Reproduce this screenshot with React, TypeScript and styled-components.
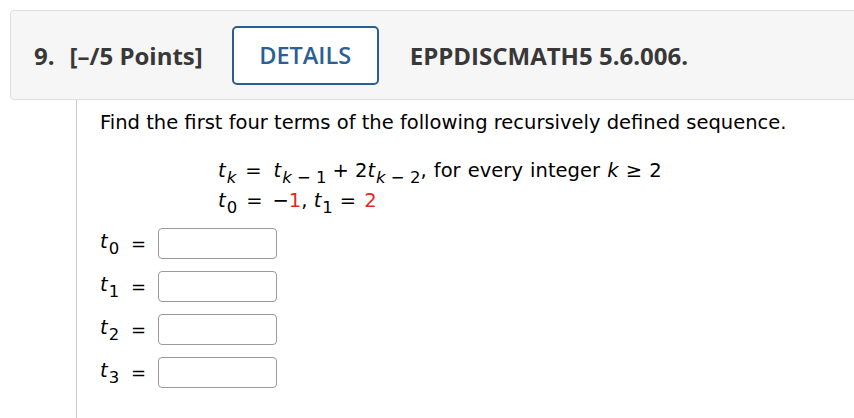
import React from "react";
import styled, { createGlobalStyle } from "styled-components";

const Global = createGlobalStyle`
  html, body { margin: 0; padding: 0; background: #ffffff; overflow: hidden; }
  #root { width: 854px; height: 418px; }
`;

const Page = styled.div`
  width: 854px;
  height: 418px;
  padding: 10px 0 0 10px;
  box-sizing: border-box;
  display: flex;
  flex-direction: column;
  overflow: hidden;
`;

const Header = styled.div`
  height: 90px;
  box-sizing: border-box;
  margin-right: -6px;
  background: #f6f6f6;
  border: 1px solid #dedede;
  border-radius: 4px;
  display: flex;
  align-items: center;
  padding-left: 23px;
  font-family: "Open Sans", sans-serif;
  font-weight: 700;
  font-size: 24px;
  color: #383838;
`;

const Num = styled.span`
  margin-right: 15px;
`;

const Points = styled.span`
  margin-right: 29px;
`;

const DetailsButton = styled.button`
  width: 147px;
  height: 59px;
  box-sizing: border-box;
  border: 2px solid #2b5f94;
  border-radius: 5px;
  background: #ffffff;
  font-family: "Open Sans", sans-serif;
  font-weight: 600;
  font-size: 23.5px;
  color: #2b6096;
  margin-right: 31px;
  padding: 0;
`;

const Code = styled.span``;

const Body = styled.div`
  flex: 1;
  margin-left: 66px;
  border-left: 1px solid #cccccc;
  padding: 10px 0 0 23px;
  font-family: Verdana, "DejaVu Sans", "Bitstream Vera Sans", sans-serif;
  font-size: 19.5px;
  color: #000;
`;

const Prompt = styled.div`
  height: 26px;
  line-height: 26px;
  margin-bottom: 24px;
`;

const MathBlock = styled.div`
  margin-left: 118px;
  display: flex;
  flex-direction: column;
  gap: 8px;
  margin-bottom: 16px;
`;

const MathLine = styled.div`
  height: 22px;
  line-height: 22px;
  white-space: pre;
`;

const Words = styled.span`
  word-spacing: 1px;
`;

const V = styled.i`
  font-style: italic;
`;

const Sub = styled.sub`
  font-size: 16.5px;
  position: relative;
  vertical-align: baseline;
  top: 6px;
  margin-left: 1px;
`;

const Op = styled.span<{ $l?: number; $r?: number }>`
  margin-left: ${(p) => p.$l ?? 8}px;
  margin-right: ${(p) => p.$r ?? 8}px;
`;

const Red = styled.span`
  color: #e8271d;
`;

const Rows = styled.div`
  display: flex;
  flex-direction: column;
  gap: 12px;
`;

const Row = styled.div`
  display: flex;
  align-items: center;
  height: 31px;
`;

const RowLabel = styled.span`
  width: 31px;
  position: relative;
  top: -2px;
`;

const Eq = styled.span`
  width: 27px;
  font-size: 18px;
`;

const AnswerBox = styled.input`
  width: 119px;
  height: 31px;
  box-sizing: border-box;
  border: 1px solid #9a9a9a;
  border-radius: 4px;
  background: #fff;
  padding: 0 6px;
  font-family: Verdana, "DejaVu Sans", sans-serif;
  font-size: 16px;
`;

function T({ s }: { s: React.ReactNode }) {
  return (
    <>
      <V>t</V>
      <Sub>{s}</Sub>
    </>
  );
}

export default function App() {
  const rows = ["0", "1", "2", "3"];
  return (
    <>
      <Global />
      <Page>
        <Header>
          <Num>9.</Num>
          <Points>[–/5 Points]</Points>
          <DetailsButton>DETAILS</DetailsButton>
          <Code>EPPDISCMATH5 5.6.006.</Code>
        </Header>
        <Body>
          <Prompt>Find the first four terms of the following recursively defined sequence.</Prompt>
          <MathBlock>
            <MathLine>
              <T s={<V>k</V>} />
              <Op $l={9} $r={12}>=</Op>
              <T s={<><V>k</V> − 1</>} />
              <Op $l={6} $r={6}>+</Op>2<T s={<><V>k</V> − 2</>} />
              <Words>, for every integer <V>k</V> ≥ 2</Words>
            </MathLine>
            <MathLine>
              <T s="0" />
              <Op $l={9} $r={10}>=</Op>−<Red>1</Red>, <T s="1" />
              <Op $l={7} $r={8}>=</Op>
              <Red>2</Red>
            </MathLine>
          </MathBlock>
          <Rows>
            {rows.map((r) => (
              <Row key={r}>
                <RowLabel>
                  <T s={r} />
                </RowLabel>
                <Eq>=</Eq>
                <AnswerBox type="text" aria-label={`t${r}`} />
              </Row>
            ))}
          </Rows>
        </Body>
      </Page>
    </>
  );
}
